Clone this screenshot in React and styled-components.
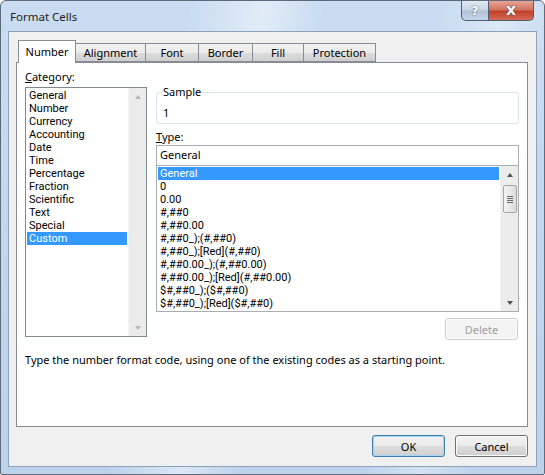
import React from 'react';
import styled, { createGlobalStyle } from 'styled-components';

const GlobalStyle = createGlobalStyle`
    html, body {
        margin:0;
        padding:0;
        background:#ffffff;
    }
    body {
        font-family:"Noto Sans", "DejaVu Sans", sans-serif;
        font-size:11px;
        color:#000;
    }
`;

/* Window frame */

const Window = styled.div`
    width:545px;
    height:475px;
    box-sizing:border-box;
    display:flex;
    flex-direction:column;
    border:1px solid #5d6b7c;
    border-radius:6px 6px 2px 2px;
    background:
        linear-gradient(100deg, rgba(255,255,255,0) 30%, rgba(255,255,255,0.45) 42%, rgba(255,255,255,0) 52%, rgba(255,255,255,0) 70%, rgba(255,255,255,0.35) 80%, rgba(255,255,255,0) 90%),
        linear-gradient(to bottom, #c9dcf1 0%, #bcd2eb 100%);
    overflow:hidden;
`;

const TitleBar = styled.div`
    height:30px;
    display:flex;
    align-items:flex-start;
    padding-left:9px;
`;

const Title = styled.span`
    font-family:"Noto Sans", sans-serif;
    font-size:11.5px;
    line-height:32px;
    color:#1e1e1e;
`;

const CaptionButtons = styled.div`
    margin-left:auto;
    margin-right:10px;
    display:flex;
`;

const CaptionButton = styled.div`
    height:20px;
    width:${p => p.$wide ? '45px' : '28px'};
    box-sizing:border-box;
    border:1px solid #4e5d70;
    border-top:none;
    border-left:${p => p.$wide ? 'none' : '1px solid #4e5d70'};
    border-radius:${p => p.$wide ? '0 0 5px 0' : '0 0 0 5px'};
    background:${p => p.$wide
        ? 'linear-gradient(to bottom, #e8a393 0%, #d27461 45%, #c0412a 55%, #d66a52 100%)'
        : 'linear-gradient(to bottom, #e1e9f3 0%, #c9d6e6 45%, #b2c3d9 55%, #c6d6ea 100%)'};
    display:flex;
    align-items:center;
    justify-content:center;
    color:#ffffff;
    font-family:"DejaVu Sans", sans-serif;
    font-weight:bold;
    font-size:${p => p.$wide ? '13px' : '12px'};
    text-shadow:0 0 2px #3a4a60;
`;

/* Client area */

const Client = styled.div`
    flex:1;
    margin:0 7px 7px 7px;
    border:1px solid #8ea2bc;
    background:#f0f0f0;
    padding:8px 8px 0 7px;
    display:flex;
    flex-direction:column;
`;

const TabStrip = styled.div`
    display:flex;
    align-items:flex-end;
    height:22px;
    padding-left:2px;
    position:relative;
    z-index:1;
`;

const Tab = styled.div`
    width:${p => p.$w}px;
    box-sizing:border-box;
    height:${p => p.$active ? '23px' : '19px'};
    margin-bottom:${p => p.$active ? '-1px' : '0'};
    margin-left:${p => p.$first ? '0' : '-1px'};
    border:1px solid #898c95;
    border-bottom:${p => p.$active ? 'none' : '1px solid #898c95'};
    background:${p => p.$active ? '#ffffff' : 'linear-gradient(to bottom, #f2f2f2 0%, #ebebeb 50%, #dddddd 51%, #cfcfcf 100%)'};
    display:flex;
    align-items:center;
    justify-content:center;
    padding-bottom:${p => p.$active ? '2px' : '0'};
    font-size:11px;
    color:#000;
`;

const TabPanel = styled.div`
    height:365px;
    box-sizing:border-box;
    background:#ffffff;
    border:1px solid #898c95;
    padding:7px 7px 0 8px;
`;

const Columns = styled.div`
    display:grid;
    grid-template-columns:122px 363px;
    column-gap:9px;
`;

const Column = styled.div`
    display:flex;
    flex-direction:column;
`;

const Label = styled.div`
    height:14px;
    line-height:14px;
    margin-top:${p => p.$top || 0}px;
    margin-bottom:${p => p.$gap}px;
    u { text-decoration:underline; }
`;

/* List boxes */

const ListBox = styled.div`
    height:${p => p.$h}px;
    box-sizing:border-box;
    border:1px solid ${p => p.$flushTop ? '#abadb3' : '#828790'};
    background:#ffffff;
    display:flex;
`;

const ListItems = styled.div`
    flex:1;
    padding:1px 1px 0 1px;
    overflow:hidden;
`;

const ListItem = styled.div`
    height:13px;
    line-height:13px;
    padding-left:2px;
    white-space:nowrap;
    font-family:Roboto, "Noto Sans", sans-serif;
    font-size:11px;
    background:${p => p.$selected ? '#3399ff' : 'transparent'};
    color:${p => p.$selected ? '#ffffff' : '#000000'};
`;

const ScrollBar = styled.div`
    width:17px;
    background:#ececec;
    border-left:1px solid #f4f4f4;
    display:flex;
    flex-direction:column;
    align-items:center;
`;

const ScrollArrow = styled.div`
    height:17px;
    width:17px;
    display:flex;
    align-items:center;
    justify-content:center;
    &::after{
        content:"";
        width:0;
        height:0;
        border-left:3.5px solid transparent;
        border-right:3.5px solid transparent;
        ${p => p.$down
            ? `border-top:4px solid ${p.$disabled ? '#b8b8b8' : '#505050'};`
            : `border-bottom:4px solid ${p.$disabled ? '#b8b8b8' : '#505050'};`}
    }
`;

const ScrollTrack = styled.div`
    flex:1;
    width:100%;
    display:flex;
    flex-direction:column;
    align-items:center;
`;

const ScrollThumb = styled.div`
    width:14px;
    height:28px;
    margin-top:2px;
    box-sizing:border-box;
    border:1px solid #a8a8a8;
    border-radius:2px;
    background:linear-gradient(to right, #f3f3f3 0%, #e8e8e8 50%, #dcdcdc 100%);
    display:flex;
    flex-direction:column;
    align-items:center;
    justify-content:center;
    gap:1px;
`;

const Grip = styled.div`
    width:6px;
    height:1px;
    background:#6b6b6b;
`;

/* Right side */

const GroupBox = styled.fieldset`
    margin:15px 0 0 0;
    padding:7px 5px 0 5px;
    height:39px;
    box-sizing:border-box;
    border:1px solid #dde3e8;
    border-radius:3px;
`;

const GroupLegend = styled.legend`
    padding:0 1px;
    font-size:11px;
    line-height:14px;
`;

const SampleValue = styled.div`
    line-height:14px;
    padding-left:1px;
`;

const TextInput = styled.div`
    height:20px;
    box-sizing:border-box;
    border:1px solid #abadb3;
    border-bottom:none;
    line-height:18px;
    padding-left:3px;
    background:#fff;
`;

const Button = styled.div`
    width:73px;
    height:22px;
    box-sizing:border-box;
    border:1px solid ${p => p.$default ? '#3c7fb1' : p.$disabled ? '#cfcfcf' : '#707070'};
    border-radius:3px;
    background:${p => p.$disabled ? '#f4f4f4' : 'linear-gradient(to bottom, #f2f2f2 0%, #ebebeb 50%, #dddddd 51%, #cfcfcf 100%)'};
    box-shadow:${p => p.$default ? 'inset 0 0 0 1px #a8d6f2' : 'inset 0 0 0 1px #fcfcfc'};
    display:flex;
    align-items:center;
    justify-content:center;
    color:${p => p.$disabled ? '#a0a0a0' : '#000'};
    font-size:11px;
`;

const DeleteRow = styled.div`
    display:flex;
    justify-content:flex-end;
    margin-top:6px;
    padding-right:1px;
`;

const Description = styled.div`
    margin-top:13px;
    line-height:14px;
`;

const Footer = styled.div`
    display:flex;
    justify-content:flex-end;
    gap:10px;
    padding-top:8px;
`;

const categories = [
    'General', 'Number', 'Currency', 'Accounting', 'Date', 'Time',
    'Percentage', 'Fraction', 'Scientific', 'Text', 'Special', 'Custom'
];

const formats = [
    'General',
    '0',
    '0.00',
    '#,##0',
    '#,##0.00',
    '#,##0_);(#,##0)',
    '#,##0_);[Red](#,##0)',
    '#,##0.00_);(#,##0.00)',
    '#,##0.00_);[Red](#,##0.00)',
    '$#,##0_);($#,##0)',
    '$#,##0_);[Red]($#,##0)'
];

const tabs = [
    { name: 'Number', w: 58 },
    { name: 'Alignment', w: 71 },
    { name: 'Font', w: 54 },
    { name: 'Border', w: 55 },
    { name: 'Fill', w: 52 },
    { name: 'Protection', w: 73 }
];

export default function App() {
    return (
        <>
            <GlobalStyle />
            <Window>
                <TitleBar>
                    <Title>Format Cells</Title>
                    <CaptionButtons>
                        <CaptionButton>?</CaptionButton>
                        <CaptionButton $wide>X</CaptionButton>
                    </CaptionButtons>
                </TitleBar>
                <Client>
                    <TabStrip>
                        {tabs.map((t, i) => (
                            <Tab key={t.name} $w={t.w} $first={i === 0} $active={i === 0}>{t.name}</Tab>
                        ))}
                    </TabStrip>
                    <TabPanel>
                        <Columns>
                            <Column>
                                <Label $gap={3}><u>C</u>ategory:</Label>
                                <ListBox $h={250}>
                                    <ListItems>
                                        {categories.map(c => (
                                            <ListItem key={c} $selected={c === 'Custom'}>{c}</ListItem>
                                        ))}
                                    </ListItems>
                                    <ScrollBar>
                                        <ScrollArrow $disabled />
                                        <ScrollTrack />
                                        <ScrollArrow $down $disabled />
                                    </ScrollBar>
                                </ListBox>
                            </Column>
                            <Column>
                                <GroupBox>
                                    <GroupLegend>Sample</GroupLegend>
                                    <SampleValue>1</SampleValue>
                                </GroupBox>
                                <Label $top={6} $gap={1}><u>T</u>ype:</Label>
                                <TextInput>General</TextInput>
                                <ListBox $h={147} $flushTop>
                                    <ListItems>
                                        {formats.map((f, i) => (
                                            <ListItem key={f} $selected={i === 0}>{f}</ListItem>
                                        ))}
                                    </ListItems>
                                    <ScrollBar>
                                        <ScrollArrow />
                                        <ScrollTrack>
                                            <ScrollThumb>
                                                <Grip /><Grip /><Grip /><Grip />
                                            </ScrollThumb>
                                        </ScrollTrack>
                                        <ScrollArrow $down />
                                    </ScrollBar>
                                </ListBox>
                                <DeleteRow>
                                    <Button $disabled>Delete</Button>
                                </DeleteRow>
                            </Column>
                        </Columns>
                        <Description>
                            Type the number format code, using one of the existing codes as a starting point.
                        </Description>
                    </TabPanel>
                    <Footer>
                        <Button $default>OK</Button>
                        <Button>Cancel</Button>
                    </Footer>
                </Client>
            </Window>
        </>
    );
}
